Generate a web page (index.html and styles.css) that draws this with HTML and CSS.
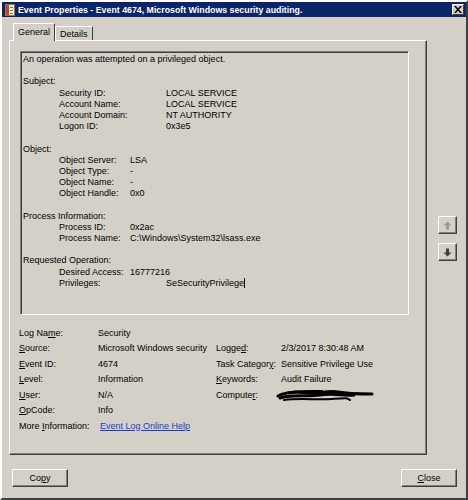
FILE: index.html
```html
<!DOCTYPE html>
<html lang="en">
<head>
    <meta charset="UTF-8">
    <title>Event Properties</title>
    <link rel="stylesheet" href="styles.css">
</head>
<body>
    <div class="window">
        <!-- Title bar -->
        <div class="titlebar">
            <svg class="app-icon" width="11" height="12" viewBox="0 0 11 12">
                <rect x="1.5" y="0.5" width="9" height="11" fill="#f4ecd0" stroke="#8a7a50"/>
                <rect x="2" y="1" width="3" height="10" fill="#c8402a"/>
                <rect x="6" y="3" width="3" height="1" fill="#8a7a50"/>
                <rect x="6" y="6" width="3" height="1" fill="#8a7a50"/>
                <rect x="6" y="9" width="3" height="1" fill="#8a7a50"/>
            </svg>
            <span class="title">Event Properties - Event 4674, Microsoft Windows security auditing.</span>
            <button class="title-close">
                <svg width="8" height="7" viewBox="0 0 8 7">
                    <path d="M0 0h2l2 2.5L6 0h2L5 3.5 8 7H6L4 4.5 2 7H0l3-3.5z" fill="#000"/>
                </svg>
            </button>
        </div>

        <div class="content">
            <div class="main">
                <div class="tabs">
                    <div class="tab active">General</div>
                    <div class="tab">Details</div>
                </div>
                <div class="panel">
                    <!-- Event description (read-only text box) -->
                    <div class="message">
                        <div class="line">An operation was attempted on a privileged object.</div>
                        <div class="line"></div>
                        <div class="line">Subject:</div>
                        <div class="line item"><span class="key wide">Security ID:</span>LOCAL SERVICE</div>
                        <div class="line item"><span class="key wide">Account Name:</span>LOCAL SERVICE</div>
                        <div class="line item"><span class="key wide">Account Domain:</span>NT AUTHORITY</div>
                        <div class="line item"><span class="key wide">Logon ID:</span>0x3e5</div>
                        <div class="line"></div>
                        <div class="line">Object:</div>
                        <div class="line item"><span class="key">Object Server:</span>LSA</div>
                        <div class="line item"><span class="key">Object Type:</span>-</div>
                        <div class="line item"><span class="key">Object Name:</span>-</div>
                        <div class="line item"><span class="key">Object Handle:</span>0x0</div>
                        <div class="line"></div>
                        <div class="line">Process Information:</div>
                        <div class="line item"><span class="key">Process ID:</span>0x2ac</div>
                        <div class="line item"><span class="key">Process Name:</span>C:\Windows\System32\lsass.exe</div>
                        <div class="line"></div>
                        <div class="line">Requested Operation:</div>
                        <div class="line item"><span class="key">Desired Access:</span>16777216</div>
                        <div class="line item"><span class="key wide">Privileges:</span>SeSecurityPrivilege<span class="caret"></span></div>
                    </div>

                    <!-- Event fields -->
                    <div class="fields">
                        <span>Log Na<u>m</u>e:</span><span>Security</span><span></span><span></span>
                        <span><u>S</u>ource:</span><span>Microsoft Windows security</span><span>Logge<u>d</u>:</span><span>2/3/2017 8:30:48 AM</span>
                        <span><u>E</u>vent ID:</span><span>4674</span><span>Task Categor<u>y</u>:</span><span>Sensitive Privilege Use</span>
                        <span><u>L</u>evel:</span><span>Information</span><span><u>K</u>eywords:</span><span>Audit Failure</span>
                        <span><u>U</u>ser:</span><span>N/A</span><span>Compute<u>r</u>:</span>
                        <span class="redacted">
                            <svg width="98" height="14" viewBox="0 0 98 14">
                                <path d="M2 8 C12 3 24 4 34 5 S52 2 62 4 S84 6 96 6" stroke="#000" stroke-width="3" fill="none" stroke-linecap="round"/>
                                <path d="M4 10 C16 6 30 9 44 7 S66 8 78 7" stroke="#000" stroke-width="3" fill="none" stroke-linecap="round"/>
                                <path d="M8 12 C22 10 40 12 56 11 S70 10 74 12" stroke="#000" stroke-width="2" fill="none" stroke-linecap="round"/>
                                <path d="M10 5 C20 2 30 3 46 3" stroke="#000" stroke-width="2" fill="none" stroke-linecap="round"/>
                            </svg>
                        </span>
                        <span><u>O</u>pCode:</span><span>Info</span><span></span><span></span>
                        <span>More <u>I</u>nformation:</span><span class="span-3"><a href="#" class="link">Event Log Online Help</a></span>
                    </div>
                </div>
            </div>

            <!-- Previous / next event -->
            <div class="side">
                <button class="arrow-button">
                    <svg width="9" height="9" viewBox="0 0 9 9">
                        <path d="M4.5 0.5 L8.5 4.5 H6 V8.5 H3 V4.5 H0.5 Z" fill="#9a9a9a"/>
                    </svg>
                </button>
                <button class="arrow-button">
                    <svg width="9" height="9" viewBox="0 0 9 9">
                        <path d="M3 0.5 H6 V4.5 H8.5 L4.5 8.5 L0.5 4.5 H3 Z" fill="#404040"/>
                    </svg>
                </button>
            </div>
        </div>

        <div class="footer">
            <button class="button">Co<u>p</u>y</button>
            <button class="button"><u>C</u>lose</button>
        </div>
    </div>
</body>
</html>
```

FILE: styles.css
```css
/* Classic Windows dialog look */
:root {
    --face: #d4d0c8;
    --light: #ffffff;
    --shadow: #808080;
    --dark: #404040;
    --title-bg: #0c2468;
}

body {
    margin: 0;
    padding: 0;
    font-family: 'Liberation Sans', Arial, sans-serif;
    font-size: 9px;
    color: #000;
    background-color: var(--face);
}

.window {
    width: 468px;
    height: 500px;
    box-sizing: border-box;
    border: 2px solid;
    border-color: var(--light) var(--dark) var(--dark) var(--light);
    background-color: var(--face);
    display: flex;
    flex-direction: column;
}

.titlebar {
    height: 15px;
    background-color: var(--title-bg);
    display: flex;
    align-items: center;
    padding: 0 2px 0 2px;
    gap: 3px;
}

.app-icon {
    flex: none;
}

.title {
    flex: 1;
    color: #fff;
    font-weight: bold;
    font-size: 8.8px;
    white-space: nowrap;
}

.title-close {
    width: 12px;
    height: 11px;
    padding: 0;
    border: 1px solid;
    border-color: var(--light) var(--dark) var(--dark) var(--light);
    background-color: var(--face);
    display: flex;
    align-items: center;
    justify-content: center;
}

.content {
    display: flex;
    padding: 6px 0 0 7px;
    gap: 11px;
}

.main {
    width: 418px;
}

.tabs {
    display: flex;
    align-items: flex-end;
    padding-left: 4px;
    height: 17px;
}

.tab {
    height: 14px;
    padding: 0 4px;
    line-height: 14px;
    border: 1px solid;
    border-bottom: none;
    border-color: var(--light) var(--dark) var(--face) var(--light);
    box-sizing: border-box;
}

.tab.active {
    height: 18px;
    line-height: 16px;
    padding: 0 4px;
    margin-bottom: -1px;
    position: relative;
    z-index: 1;
    background-color: var(--face);
}

.panel {
    height: 415px;
    box-sizing: border-box;
    border: 1px solid;
    border-color: var(--light) var(--dark) var(--dark) var(--light);
    box-shadow: inset -1px -1px 0 var(--shadow);
    padding: 10px 0 0 10px;
}

.message {
    width: 389px;
    height: 264px;
    box-sizing: border-box;
    border: 1px solid;
    border-color: var(--shadow) var(--light) var(--light) var(--shadow);
    box-shadow: inset 1px 1px 0 var(--dark);
    padding: 2px 0 0 2px;
}

.line {
    height: 11.2px;
    line-height: 11.2px;
    white-space: nowrap;
}

.item {
    padding-left: 36px;
}

.key {
    display: inline-block;
    width: 71px;
}

.key.wide {
    width: 107px;
}

.caret {
    display: inline-block;
    width: 1px;
    height: 10px;
    background-color: #000;
    vertical-align: -2px;
}

.fields {
    display: grid;
    grid-template-columns: 79px 118px 65px 1fr;
    grid-auto-rows: 15.5px;
    align-items: center;
    margin: 10px 0 0 -1px;
    white-space: nowrap;
}

.span-3 {
    grid-column: span 3;
}

.redacted {
    margin-left: -5px;
    display: flex;
}

.link {
    color: #1a3cc8;
    padding-left: 2px;
}

.side {
    display: flex;
    flex-direction: column;
    gap: 9px;
    padding-top: 193px;
}

.arrow-button,
.button {
    padding: 0;
    border: 1px solid;
    border-color: var(--light) var(--dark) var(--dark) var(--light);
    box-shadow: inset -1px -1px 0 var(--shadow);
    background-color: var(--face);
    font-family: inherit;
    font-size: 9px;
    color: #000;
}

.arrow-button {
    width: 19px;
    height: 18px;
    display: flex;
    align-items: center;
    justify-content: center;
}

.footer {
    display: flex;
    justify-content: space-between;
    padding: 14px 9px 0 10px;
}

.button {
    width: 56px;
    height: 18px;
}
```
